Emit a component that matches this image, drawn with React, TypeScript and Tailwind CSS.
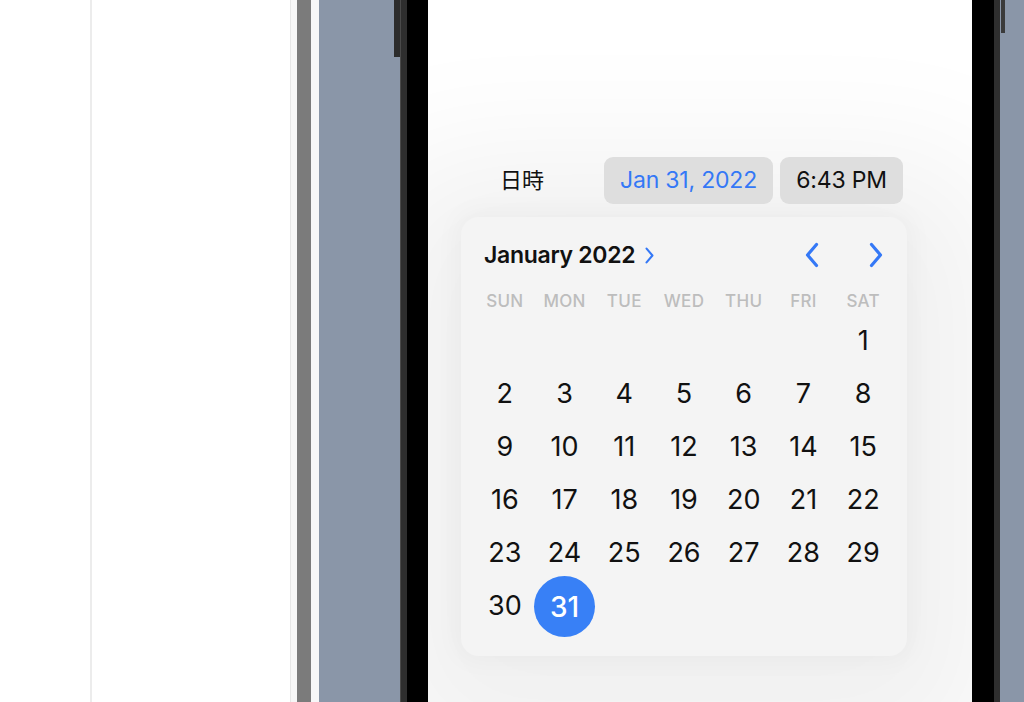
import React from "react";

const weekdays = ["SUN", "MON", "TUE", "WED", "THU", "FRI", "SAT"];

function Chevron({ dir, className }: { dir: "left" | "right"; className?: string }) {
  return (
    <svg viewBox="0 0 16 26" className={className} fill="none" stroke="#3478f6" strokeWidth={3.2} strokeLinecap="round" strokeLinejoin="round">
      {dir === "left" ? <path d="M12.5 2.5 L3.5 13 L12.5 23.5" /> : <path d="M3.5 2.5 L12.5 13 L3.5 23.5" />}
    </svg>
  );
}

export default function App() {
  const cells: (number | null)[] = [null, null, null, null, null, null];
  for (let d = 1; d <= 31; d++) cells.push(d);
  while (cells.length % 7 !== 0) cells.push(null);
  const rows: (number | null)[][] = [];
  for (let i = 0; i < cells.length; i += 7) rows.push(cells.slice(i, i + 7));

  return (
    <div className="flex w-[1024px] h-[702px] overflow-hidden bg-white" style={{ fontFamily: 'Inter, "Noto Sans CJK JP", sans-serif' }}>
      <div className="w-[90px] shrink-0 bg-white" />
      <div className="w-[200px] shrink-0 bg-white border-l-2 border-[#ececec]" />
      <div className="w-[7px] shrink-0 bg-[#f6f6f6] border-l border-[#e6e6e6]" />
      <div className="w-[14px] shrink-0 bg-[#7b7b7b]" />
      <div className="w-[8px] shrink-0 bg-[#f7f7f8]" />
      <div className="flex flex-1 bg-[#8a96a8] pl-[75px]">
        <div className="w-[6px] h-[57px] shrink-0 bg-[#2c2c2c]" />
        <div className="w-[600px] shrink-0 h-full bg-[#2e2e2e] px-[6px] border-l border-[#4a4a4a]">
          <div className="h-full bg-black px-[21px]">
            <div className="relative h-full w-[544px] bg-white overflow-hidden pl-[33px] pt-[157px]">
              <div className="w-[446px]">
                <div className="flex items-center h-[47px]">
                  <div className="pl-[39px] text-[22px] text-[#111] flex-1">日時</div>
                  <div className="flex gap-[7px] pr-[4px]">
                    <div className="w-[169px] h-[47px] rounded-[9px] bg-[#dedede] flex items-center justify-center text-[23px] text-[#3478f6] tracking-[-0.2px]">
                      Jan 31, 2022
                    </div>
                    <div className="w-[123px] h-[47px] rounded-[9px] bg-[#dedede] flex items-center justify-center text-[23px] text-[#111] tracking-[-0.2px]">
                      6:43 PM
                    </div>
                  </div>
                </div>
                <div className="mt-[13px] h-[439px] rounded-[18px] bg-[#f4f4f4] shadow-[0_0_24px_6px_rgba(0,0,0,0.03),0_30px_140px_90px_rgba(0,0,0,0.06)] px-[14px]">
                  <div className="flex items-center h-[76px]">
                    <div className="pl-[9px] flex items-center flex-1">
                      <span className="text-[23px] font-semibold text-[#111] tracking-[-0.3px]">January 2022</span>
                      <Chevron dir="right" className="w-[11px] h-[17px] ml-[9px]" />
                    </div>
                    <div className="flex items-center gap-[48px] pr-[9px]">
                      <Chevron dir="left" className="w-[16px] h-[26px]" />
                      <Chevron dir="right" className="w-[16px] h-[26px]" />
                    </div>
                  </div>
                  <div className="grid grid-cols-7 h-[15px] items-center">
                    {weekdays.map((w) => (
                      <div key={w} className="text-center text-[17px] font-medium text-[#bdbdbd] leading-none tracking-[0.3px]">
                        {w}
                      </div>
                    ))}
                  </div>
                  <div className="mt-[7px]">
                    {rows.map((r, i) => (
                      <div key={i} className="grid grid-cols-7 grid-rows-[53px] h-[53px]">
                        {r.map((d, j) => (
                          <div key={j} className="flex items-center justify-center h-[53px]">
                            {d === 31 ? (
                              <div className="w-[61px] h-[61px] shrink-0 rounded-full bg-[#3880f6] flex items-center justify-center text-[28px] font-medium text-white">
                                31
                              </div>
                            ) : d ? (
                              <span className="text-[27px] text-[#111]">{d}</span>
                            ) : null}
                          </div>
                        ))}
                      </div>
                    ))}
                  </div>
                </div>
              </div>
            </div>
          </div>
        </div>
        <div className="w-[4px] h-[33px] ml-[1px] shrink-0 bg-[#3a3a3a]" />
      </div>
    </div>
  );
}
